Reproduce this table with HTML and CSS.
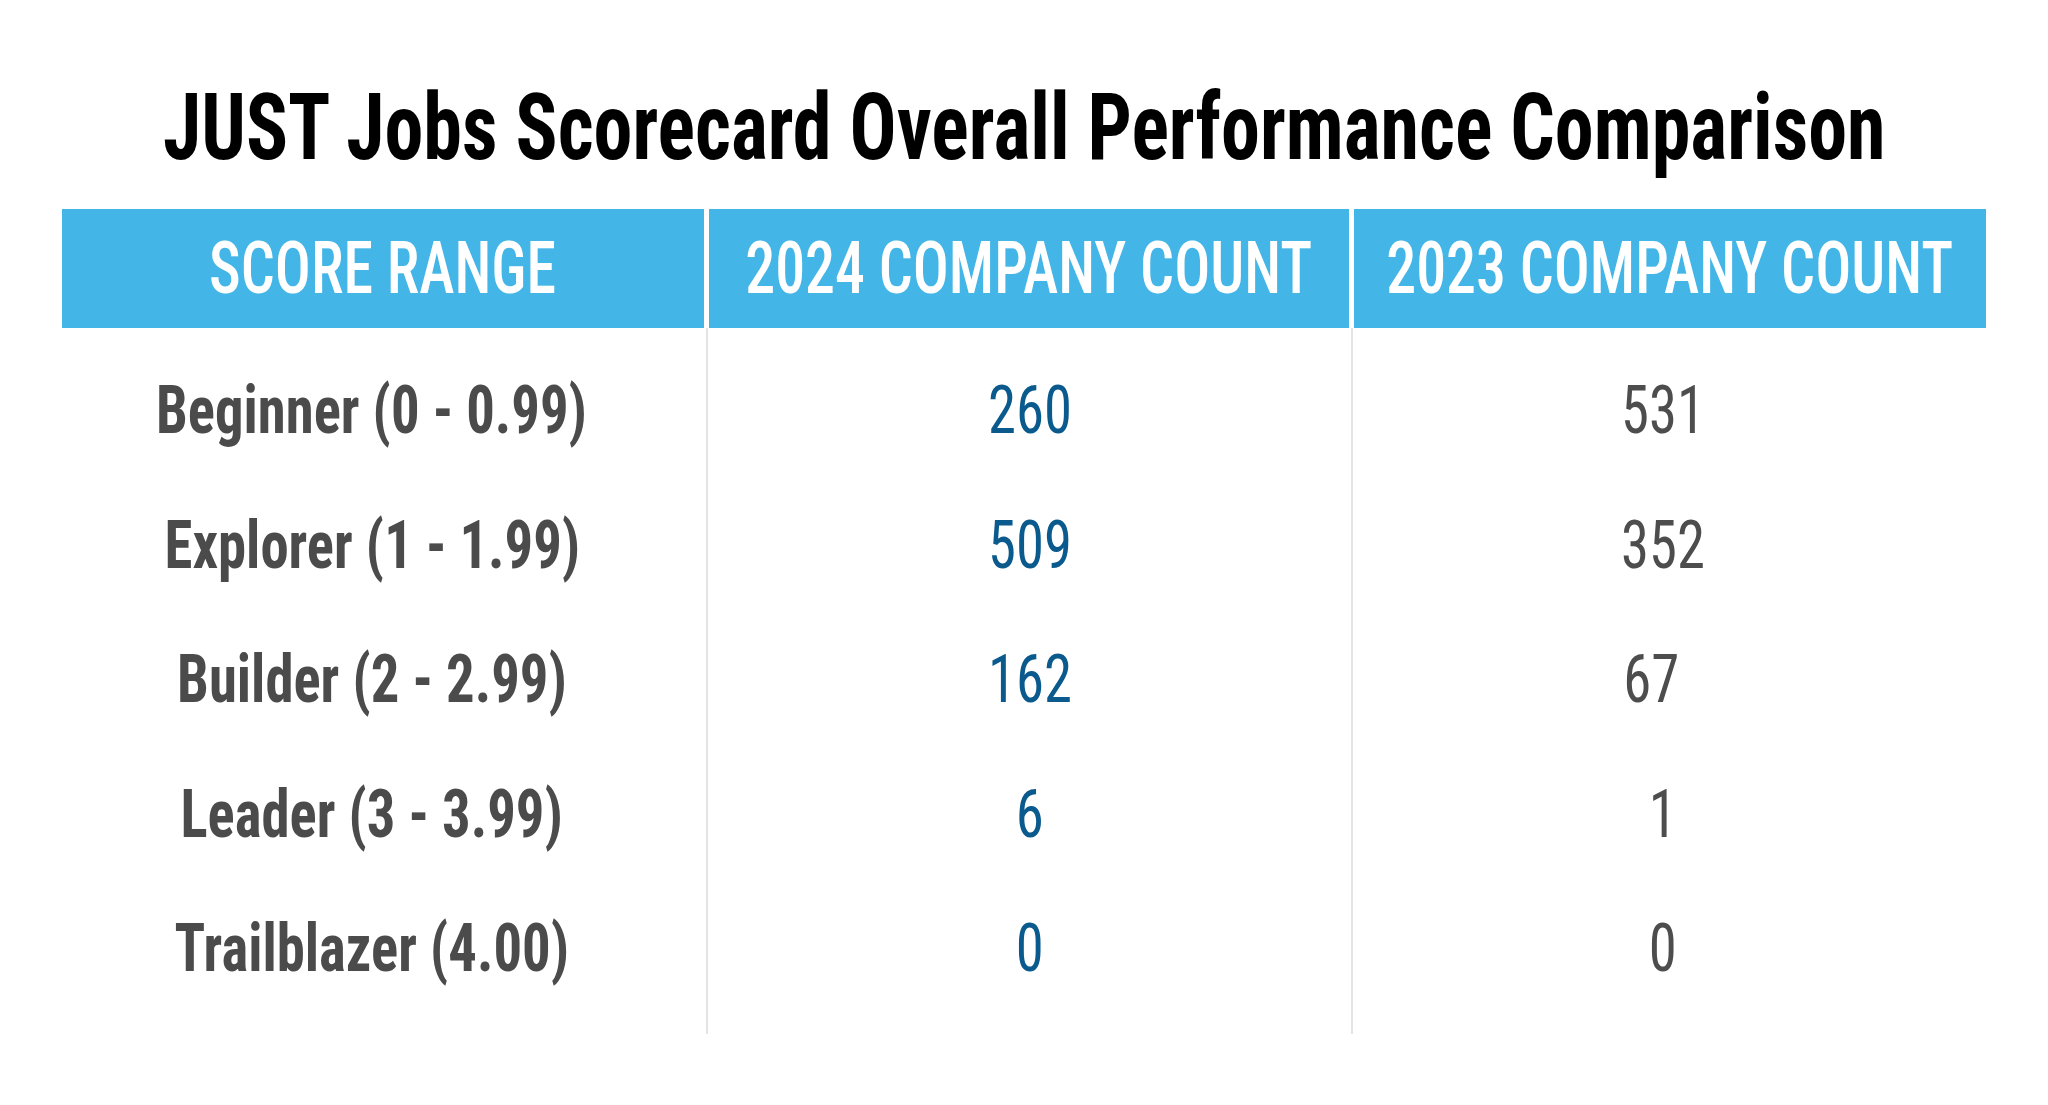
FILE: index.html
```html
<!DOCTYPE html>
<html lang="en">
<head>
<meta charset="utf-8">
<title>JUST Jobs Scorecard Overall Performance Comparison</title>
<link rel="stylesheet" href="styles.css">
</head>
<body>
<main class="page">
  <h1 class="title"><span class="txt">JUST Jobs Scorecard Overall Performance Comparison</span></h1>
  <div class="table">
    <div class="thead">
      <div class="th"><span class="txt">SCORE RANGE</span></div>
      <div class="th"><span class="txt">2024 COMPANY COUNT</span></div>
      <div class="th"><span class="txt">2023 COMPANY COUNT</span></div>
    </div>
    <div class="tbody">
      <div class="col col-range">
        <div class="cell label"><span class="txt">Beginner (0 - 0.99)</span></div>
        <div class="cell label"><span class="txt">Explorer (1 - 1.99)</span></div>
        <div class="cell label"><span class="txt">Builder (2 - 2.99)</span></div>
        <div class="cell label"><span class="txt">Leader (3 - 3.99)</span></div>
        <div class="cell label"><span class="txt">Trailblazer (4.00)</span></div>
      </div>
      <div class="col col-2024">
        <div class="cell num blue"><span class="txt">260</span></div>
        <div class="cell num blue"><span class="txt">509</span></div>
        <div class="cell num blue"><span class="txt">162</span></div>
        <div class="cell num blue"><span class="txt">6</span></div>
        <div class="cell num blue"><span class="txt">0</span></div>
      </div>
      <div class="col col-2023">
        <div class="cell num gray"><span class="txt">531</span></div>
        <div class="cell num gray"><span class="txt">352</span></div>
        <div class="cell num gray shift"><span class="txt">67</span></div>
        <div class="cell num gray"><span class="txt">1</span></div>
        <div class="cell num gray"><span class="txt">0</span></div>
      </div>
    </div>
  </div>
</main>
</body>
</html>
```
FILE: styles.css
```css
html, body {
  margin: 0;
  padding: 0;
  background: #ffffff;
}

body {
  font-family: "Roboto Condensed", "Roboto", "Liberation Sans", sans-serif;
  font-stretch: 75%;
}

.page {
  width: 2048px;
  height: 1105px;
  display: flex;
  flex-direction: column;
  align-items: center;
}

.txt {
  display: inline-block;
  white-space: nowrap;
  flex: none;
  transform: scaleX(0.84);
}

.title {
  margin: 0;
  padding-top: 81px;
  font-size: 93px;
  line-height: 93px;
  font-weight: 700;
  color: #000000;
  text-align: center;
}

.table {
  margin-top: 35px;
  width: 1924px;
  display: flex;
  flex-direction: column;
}

.thead {
  display: grid;
  grid-template-columns: 642px 640px 632px;
  column-gap: 5px;
}

.th {
  height: 119px;
  display: flex;
  justify-content: center;
  align-items: center;
  background: #43b5e6;
  color: #ffffff;
  font-size: 73px;
  line-height: 119px;
  font-weight: 500;
}

.th .txt {
  transform: scaleX(0.82);
}

.tbody {
  display: flex;
  height: 706px;
}

.col {
  display: flex;
  flex-direction: column;
  padding-top: 15px;
  box-sizing: border-box;
}

.col-range {
  width: 644px;
}

.col-2024 {
  width: 647px;
  border-left: 2px solid #e4e4e4;
  border-right: 2px solid #e4e4e4;
}

.col-2023 {
  width: 633px;
}

.cell {
  height: 134.5px;
  display: flex;
  justify-content: center;
  font-size: 67.5px;
  line-height: 134.5px;
}

.label {
  font-weight: 700;
  color: #4b4b4b;
  padding-right: 24px;
}

.num {
  font-weight: 400;
}

.blue {
  color: #0b5a8d;
}

.gray {
  color: #4d4d4d;
  padding-right: 13px;
}

.gray.shift {
  padding-right: 37px;
}
```
